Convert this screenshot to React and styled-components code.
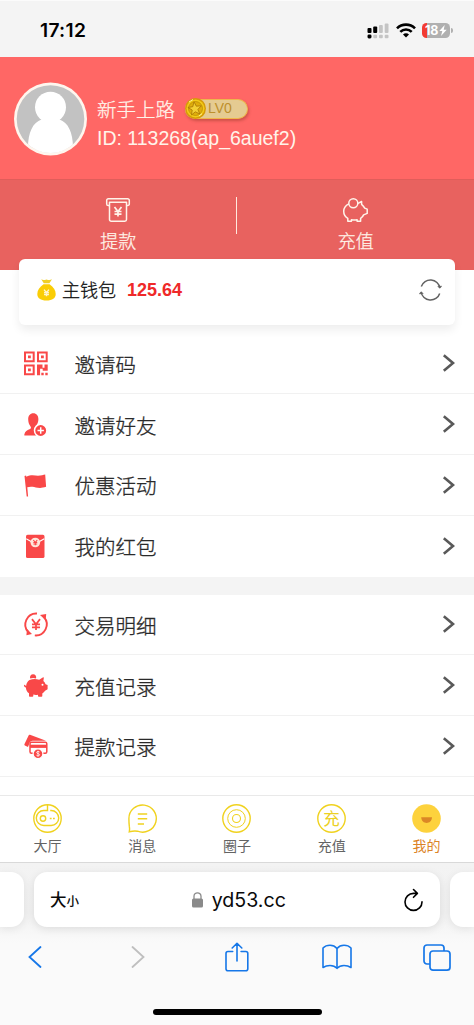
import React from 'react';
import styled, { createGlobalStyle } from "styled-components";

const GlobalStyle = createGlobalStyle`
  * { box-sizing: border-box; }
  body { margin: 0; background: #fff; }
  svg { display: block; flex: none; overflow: visible; }
`;

const Page = styled.div`
  width: 474px;
  height: 1025px;
  display: flex;
  flex-direction: column;
  overflow: hidden;
  background: #fff;
  font-family: "Liberation Sans", "Noto Sans CJK SC", sans-serif;
  font-weight: 300;
`;

const StatusBar = styled.header`
  height: 57px;
  flex: none;
  display: flex;
  align-items: center;
  justify-content: space-between;
  padding: 3px 22px 0 40px;
  background: #f4f4f4;
  border-top: 1px solid #fbfbfb;
`;

const Clock = styled.span`
  margin-top: -2px;
  font: 600 19.2px/22px Inter, sans-serif;
  letter-spacing: 0.3px;
  color: #000;
`;

const StatusIcons = styled.div`
  display: flex;
  align-items: center;
  gap: 6.5px;
`;

const Battery = styled.div`
  display: flex;
  align-items: center;
  justify-content: center;
  width: 27.5px;
  height: 15.5px;
  margin-right: 2.5px;
  border-radius: 4.5px;
  background: linear-gradient(90deg, #f23b32 0 5px, #b0b0b0 5px);
  color: #fff;
  font: 700 12.5px/15px Inter, sans-serif;
  position: relative;
  &::after {
    content: "";
    position: absolute;
    right: -3px;
    top: 5.5px;
    width: 1.5px;
    height: 4.5px;
    border-radius: 0 2px 2px 0;
    background: #b0b0b0;
  }
`;

const Profile = styled.section`
  height: 122px;
  flex: none;
  display: flex;
  align-items: center;
  gap: 10px;
  padding: 2px 14px 0;
  background: #ff6765;
  color: #fff4ea;
`;

const ProfileText = styled.div`
  display: flex;
  flex-direction: column;
  padding-top: 10px;
`;

const NameLine = styled.div`
  display: flex;
  align-items: center;
  gap: 10px;
  height: 28px;
  font-size: 19.5px;
  line-height: 28px;
  -webkit-text-stroke: 0.25px;
`;

const UserId = styled.div`
  font-size: 19.5px;
  line-height: 28px;
`;

const Level = styled.span`
  display: flex;
  align-items: center;
  width: 63px;
  height: 20px;
  margin-top: -3px;
  border: 1.5px solid #efb64c;
  border-left: 0;
  border-radius: 10px;
  background: #e5cb91;
  box-shadow: 1px 2px 3px rgba(130, 50, 30, 0.4);
  color: #bd902d;
  font-size: 14px;
  line-height: 17px;
  gap: 2px;
  -webkit-text-stroke: 0;
`;

const Actions = styled.section`
  height: 91px;
  flex: none;
  display: flex;
  align-items: flex-start;
  background: #e8625f;
  border-top: 1px solid #e05d5a;
  color: #fff4ea;
`;

const Action = styled.div`
  flex: 1;
  display: flex;
  flex-direction: column;
  align-items: center;
  gap: 7px;
  padding-top: 18px;
  font-size: 18px;
  line-height: 26px;
  -webkit-text-stroke: 0.25px;
`;

const ActionDivider = styled.div`
  width: 1px;
  height: 37px;
  margin: 17px 1px 0 -1px;
  background: #ffe9df;
`;

const Wallet = styled.section`
  height: 65.5px;
  flex: none;
  display: flex;
  align-items: flex-start;
  margin: -11px 19px 0;
  padding: 17px 13px 0 18px;
  border-radius: 6px;
  background: #fff;
  box-shadow: 0 5px 10px rgba(0, 0, 0, 0.07);
  color: #0c0c0c;
  font-size: 18px;
  line-height: 28px;
`;

const WalletIcon = styled.span`
  height: 28px;
  display: flex;
  align-items: center;
`;

const WalletName = styled.span`
  margin-left: 6px;
  padding-top: 1px;
  -webkit-text-stroke: 0.3px;
`;

const Balance = styled.span`
  margin-left: 11px;
  flex: 1;
  font-weight: 700;
  color: #ef2929;
`;

const MenuGroup = styled.nav`
  flex: none;
  padding-top: ${(p) => p.$top || 0}px;
  border-bottom: ${(p) => (p.$gap ? "18.5px solid #f4f4f4" : "0")};
`;

const MenuRow = styled.div`
  height: 60.75px;
  display: flex;
  align-items: center;
  padding: 0 19px 0 23.5px;
  border-bottom: 1px solid ${(p) => (p.$last ? "transparent" : "#f1f1f1")};
  color: #2a2a2a;
`;

const MenuLabel = styled.span`
  flex: 1;
  padding: 5px 0 0 27px;
  font-size: 20.5px;
  line-height: 30px;
  -webkit-text-stroke: 0.3px;
`;

const TabBar = styled.nav`
  height: 67px;
  flex: none;
  display: flex;
  margin-top: auto;
  border-top: 1px solid #e9e9e9;
  background: #fff;
`;

const Tab = styled.div`
  flex: 1;
  display: flex;
  flex-direction: column;
  align-items: center;
  padding-top: 8px;
  gap: 3px;
  font-size: 14px;
  font-weight: 400;
  line-height: 20px;
  color: ${(p) => (p.$active ? "#dc8427" : "#636363")};
`;

const Browser = styled.footer`
  height: 163px;
  flex: none;
  display: flex;
  flex-direction: column;
  align-items: center;
  border-top: 1px solid #d9d9d9;
  background: linear-gradient(#f3f3f3, #f1f1f1 50px, #fafafa 80px);
`;

const AddressRow = styled.div`
  width: 474px;
  display: flex;
  gap: 10px;
  padding-top: 9px;
`;

const SideTab = styled.div`
  width: 24px;
  height: 55px;
  background: #fff;
  box-shadow: 0 2px 8px rgba(0, 0, 0, 0.08);
  border-radius: ${(p) => (p.$right ? "13px 0 0 13px" : "0 13px 13px 0")};
`;

const Address = styled.div`
  flex: 1;
  height: 55px;
  display: flex;
  align-items: center;
  justify-content: space-between;
  padding: 0 17px 0 16px;
  border-radius: 13px;
  background: #fff;
  box-shadow: 0 2px 9px rgba(0, 0, 0, 0.1);
  color: #0a0a0a;
`;

const TextSize = styled.span`
  width: 24px;
  white-space: nowrap;
  font: 500 16.5px/24px "Noto Sans CJK SC", sans-serif;
  small { font-size: 12.5px; }
`;

const Url = styled.span`
  display: flex;
  align-items: center;
  gap: 8.5px;
  font: 400 19.6px/24px Inter, sans-serif;
`;

const Toolbar = styled.div`
  width: 474px;
  height: 60px;
  display: grid;
  grid-template-columns: 86px 103px 96px 103px 86px;
  align-items: center;
  justify-items: center;
  svg:first-child { margin-right: 16px; }
  svg:last-child { margin-left: 12px; }
`;

const HomeBar = styled.div`
  width: 169px;
  height: 6px;
  margin-top: 22px;
  border-radius: 3px;
  background: #000;
`;

const RED = "#f94848";
const GOLD = "#f0d21f";
const BLUE = "#1677e8";

function Yen({ x, y, s = 1, color, w = 1.5 }) {
  return (
    <g transform={`translate(${x} ${y}) scale(${s})`} fill="none" stroke={color} strokeWidth={w}>
      <path d="M-3.5-4.5 0 0l3.5-4.5M0 0v5M-3.5 0h7M-3.5 2.6h7" />
    </g>
  );
}

function Signal() {
  return (
    <svg width="22" height="16" viewBox="0 0 22 16">
      <g fill="#000">
        <rect x="0.5" y="5" width="4" height="5" rx="1" />
        <rect x="6.2" y="3.5" width="4" height="6.5" rx="1" />
        <rect x="0.5" y="11.5" width="4" height="4" rx="1.4" />
      </g>
      <g fill="#c4c4c4">
        <rect x="12" y="2" width="3.8" height="8" rx="1" />
        <rect x="17.7" y="0.5" width="3.8" height="9.5" rx="1" />
        <rect x="6.3" y="11.8" width="3.8" height="3.5" rx="1" />
        <rect x="12" y="11.8" width="3.8" height="3.5" rx="1" />
        <rect x="17.7" y="11.8" width="3.8" height="3.5" rx="1" />
      </g>
    </svg>
  );
}

function Wifi() {
  return (
    <svg width="20" height="15" viewBox="0 0 20 15">
      <g fill="none" stroke="#000" strokeWidth="2.6">
        <path d="M1 5.3a12.8 12.8 0 0 1 18 0M4.3 8.8a8.1 8.1 0 0 1 11.4 0" />
      </g>
      <path d="M7 11.4a4.2 4.2 0 0 1 6 0l-3 3.1z" />
    </svg>
  );
}

function Avatar() {
  return (
    <svg width="73" height="74" viewBox="0 0 73 74">
      <defs>
        <clipPath id="face"><circle cx="36.5" cy="37" r="34" /></clipPath>
      </defs>
      <circle cx="36.5" cy="37" r="36.5" fill="#fff6ee" />
      <circle cx="36.5" cy="37" r="33.8" fill="#c2c2c2" />
      <g fill="#fff" clipPath="url(#face)">
        <circle cx="36.5" cy="25.3" r="15.5" />
        <path d="M14 66c0-16 5-25.5 13.5-28.5q2-1 0-3h18q-2 2 0 3C54 40.5 59 50 59 66l-4 8H18z" />
      </g>
    </svg>
  );
}

function Coin() {
  return (
    <svg width="21" height="21" viewBox="0 0 21 21">
      <circle cx="10.5" cy="10.5" r="10.5" fill="#d69b08" />
      <circle cx="10.5" cy="10.5" r="9" fill="#f3cb17" />
      <circle cx="10.5" cy="10.5" r="7" fill="#dfae0b" stroke="#b98607" strokeWidth=".7" />
      <path d="m9 3.8 2.300 4.400 5-.4-3.400 3.600 1.900 4.600-4.500-2.200-3.800 3.200.7-5-4.300-2.500 4.900-.8z" fill="#f3d033" stroke="#a87305" strokeWidth=".8" />
      <path d="m4 4 4-2.500M14 18l3-2.300" stroke="#fff29a" />
    </svg>
  );
}

function WithdrawIcon() {
  return (
    <svg width="24" height="24" viewBox="0 0 24 24" fill="none" stroke="#fff4ea" strokeWidth="1.5" strokeLinejoin="round">
      <path d="M3.5 7.5H2.3A1.6 1.6 0 0 1 .7 5.9V2.3A1.6 1.6 0 0 1 2.3.7h19.400a1.600 1.600 0 0 1 1.600 1.600v3.600a1.600 1.600 0 0 1-1.600 1.600h-1.200" />
      <path d="M3.5 4.3h17v17.200a1.700 1.700 0 0 1-1.700 1.700H5.200a1.700 1.700 0 0 1-1.700-1.700z" />
      <Yen x={12} y={13.5} color="#fff4ea" w={1.7} />
    </svg>
  );
}

function PigOutline() {
  return (
    <svg width="25" height="24" viewBox="0 0 25 24" fill="none" stroke="#fff4ea" strokeWidth="1.5" strokeLinejoin="round">
      <circle cx="10.3" cy="5.2" r="4.5" />
      <path d="M5.800 5.800C2.500 7.500.7 10 .7 13.200c0 3.300 1.600 5.600 4.100 7.200v2.900h3.600v-1.600c2 .5 3.800.5 5.700 0v1.600h3.500v-2.900c1.500-.9 2.400-2 3-3.500l3.600-1.500v-4.300l-2.500-1C20.900 8.400 20 7.400 18.600 6.300V3.500l-3.100 1.700h-.7" />
    </svg>
  );
}

function MoneyBag() {
  return (
    <svg width="19" height="22" viewBox="0 0 19 22">
      <path d="M4.200.3c1.600 1 3 .9 5.300.2 2.200.7 3.800.8 5.500-.2l-2.600 4H6.800z" fill="#f0cf26" />
      <path d="M6.500 5.300h6.100C16.500 8 18.700 11.300 18.700 15c0 4.300-3.300 6.500-9.200 6.500S.3 19.300.3 15c0-3.700 2.300-7 6.200-9.700z" fill="#facd05" />
      <Yen x={9.5} y={13.8} s={0.7} color="#fff4cf" w={2} />
    </svg>
  );
}

function SyncIcon() {
  return (
    <svg width="23" height="22" viewBox="0 0 23 22" fill="none" stroke="#626262" strokeWidth="1.5">
      <path d="M2.300 7.500A9.600 9.600 0 0 1 20.900 9M20.700 14.500A9.600 9.600 0 0 1 2.100 13" />
      <path d="m18.700 7.500 2.300 1.800 1.700-2.200zM4.300 14.500 2 12.700.3 14.900z" fill="#626262" strokeWidth=".5" />
    </svg>
  );
}

function QrIcon() {
  return (
    <g>
      <g fill="none" stroke={RED} strokeWidth="2">
        <path d="M1 1h8.700v8.700H1zM14 1h8.700v8.700H14zM1 14h8.700v8.700H1z" />
      </g>
      <path d="M4 4h2.800v2.800H4zM17 4h2.800v2.800H17zM4 17h2.800v2.800H4zM13 13h5.500v3.200h2V13h3.200v6.200h-5v-2h-2.600v6.500H13zM17.300 21.300h2.400v2.400h-2.400zM21.300 21.300h2.400v2.400h-2.400z" />
    </g>
  );
}

function InviteIcon() {
  return (
    <g>
      <path d="M9.300.8c3.200 0 5.100 2.400 5.100 5.900 0 2.900-1.100 5.100-2.300 6.600-.6.900-.4 2 .7 2.500l1 .5-1.600 6.800H.9c-.7 0-.7-.6-.5-1.300.7-3 2.700-4.300 5.100-5 1.600-.5 1.900-1.800.9-3.100C5 12 4.200 9.600 4.200 6.700 4.200 3.200 6.100.8 9.300.8z" />
      <circle cx="16.7" cy="18" r="6.2" fill={RED} stroke="#fff" strokeWidth="1.5" />
      <path d="M16.700 14.800v6.400M13.500 18h6.400" stroke="#fff" strokeWidth="1.5" />
    </g>
  );
}

function FlagIcon() {
  return <path d="M.5 2.500 2.100 2l.2 1.200C7.200.8 11.200 2.200 14 2.200c3.100 0 5.500-.8 7.200-1.200l.9 12.300c-6 2.200-10.500.5-13.500 0-2-.3-3.700 0-5.300.4l.8 9.200-1.400.1z" />;
}

function RedPacket() {
  return (
    <g>
      <rect x="2" y=".3" width="18.5" height="23.3" rx="1.6" />
      <path d="m2.200 4.300 6.200 3.400M20.300 4.300l-6.200 3.400" stroke="#fff" strokeWidth="1.1" />
      <circle cx="11.3" cy="8" r="4.8" fill="#ffe7dc" />
      <Yen x={11.3} y={8} s={0.55} color={RED} w={2} />
    </g>
  );
}

function TradeIcon() {
  return (
    <g>
      <g fill="none" stroke={RED} strokeWidth="1.9">
        <path d="M13 1A11 11 0 0 0 4.300 19.500M10.800 22.900A11 11 0 0 0 20 4.700" />
      </g>
      <path d="m16 2.400 6.200-1-.6 6.300zM8 21.500l-5.600 1.300.6-6.300z" />
      <Yen x={12} y={11.8} s={1.15} color={RED} w={1.5} />
    </g>
  );
}

function PigIcon() {
  return (
    <g>
      <path d="M6.200 4.900a3.100 3.100 0 1 1 5.800 0q-2.800-.9-5.800 0z" />
      <path d="M5.500 6.500c3.300-1.400 6.500-1.400 9.700-.2l3.600-2.400c.8-.3 1.100 0 1 .7l-.4 2.900c1.100 1 1.800 2 2.200 3.200l2 .7v4.400l-2.500 1.500c-.8 1.100-1.700 2-2.800 2.700v2.400c0 .5-.3.800-.8.800h-2.700c-.6 0-.8-.3-.8-.9v-1.100c-1.700.3-3.200.2-4.700-.1v1.200c0 .6-.3.900-.8.900H5.800c-.5 0-.8-.3-.8-.8v-2.700C3 18.300 2 16.200 1.900 13.900c-1.300-.3-1.900-1.200-1.900-2.500l1-.2c.1.700.5 1.100 1.100 1.200.3-2.500 1.500-4.600 3.400-5.900z" />
      <circle cx="18.5" cy="11.2" r="1" fill="#fff" />
    </g>
  );
}

function CardsIcon() {
  return (
    <g>
      <path d="M4.600.9Q5-.1 6 .3l16 5.900H8.500q-2 0-2.800 1.800L4 12.500.9 11q-.8-.5-.5-1.300z" />
      <rect x="6" y="7.7" width="16.8" height="11" rx="1.5" fill="#fff" stroke={RED} strokeWidth="1.5" />
      <path d="M6 10.200h17v3.200H6z" />
      <circle cx="14" cy="19.2" r="4.9" stroke="#fff" strokeWidth="1.2" />
      <path d="M15.600 17.500c-.7-.8-3-.7-3 .5s3 1 3 2.300-2.400 1.300-3.200.4M14 16.300v5.800" fill="none" stroke="#fff" strokeWidth=".8" />
    </g>
  );
}

function Chevron() {
  return (
    <svg width="12" height="18" viewBox="0 0 12 18" fill="none" stroke="#595959" strokeWidth="2.6">
      <path d="m.8 1.200 9.200 7.800-9.200 7.800" />
    </svg>
  );
}

const inviteMenu = [
  { label: "邀请码", Icon: QrIcon },
  { label: "邀请好友", Icon: InviteIcon },
  { label: "优惠活动", Icon: FlagIcon },
  { label: "我的红包", Icon: RedPacket },
];

const recordMenu = [
  { label: "交易明细", Icon: TradeIcon },
  { label: "充值记录", Icon: PigIcon },
  { label: "提款记录", Icon: CardsIcon },
];

function Menu({ items, top, gap }) {
  return (
    <MenuGroup $top={top} $gap={gap}>
      {items.map(({ label, Icon }, i) => (
        <MenuRow key={label} $last={gap && i === items.length - 1}>
          <svg width="24" height="24" viewBox="0 -0.5 24 24" fill={RED}><Icon /></svg>
          <MenuLabel>{label}</MenuLabel>
          <Chevron />
        </MenuRow>
      ))}
    </MenuGroup>
  );
}

const tabs = [
  {
    label: "大厅",
    art: (
      <>
        <circle cx="14.5" cy="14.5" r="13.7" />
        <path d="M14.500 1v5.500H10.800a7.500 7.500 0 0 0 0 15h7.400a7.500 7.500 0 0 0 0-15h-1" />
        <circle cx="10" cy="14.5" r="2.7" />
        <path d="M16.800 14.500h1.800M20 14.500h1.800" strokeWidth="1.6" />
      </>
    ),
  },
  {
    label: "消息",
    art: (
      <>
        <path d="M1.300 27.700c.7-2.500.3-4 0-5.500C1 19.500.9 17 .9 14.500a13.700 13.600 0 1 1 8.600 12.700c-2.800-.5-5.200-.2-8.200.5z" />
        <path d="M9.800 10h9.400M9.800 14.700h9.400M9.800 20h6.200" strokeWidth="1.6" />
      </>
    ),
  },
  {
    label: "圈子",
    art: (
      <>
        <circle cx="14.5" cy="14.5" r="13.7" />
        <circle cx="14.5" cy="14.5" r="8.8" strokeWidth="1" />
        <circle cx="14.5" cy="14.5" r="4" strokeWidth="1.1" />
      </>
    ),
  },
  {
    label: "充值",
    art: (
      <>
        <circle cx="14.5" cy="14.5" r="13.7" />
        <text x="14.5" y="20.5" textAnchor="middle" fontSize="16.5" fill="#ecd022" stroke="none">充</text>
      </>
    ),
  },
  {
    label: "我的",
    active: true,
    art: (
      <>
        <circle cx="14.5" cy="14.5" r="14.3" fill="#fdd23d" stroke="none" />
        <path d="M9.200 13.300h10.800c-.3 7.600-10.500 7.600-10.800 0z" fill="#db8726" stroke="none" />
      </>
    ),
  },
];

function Safari() {
  return (
    <Browser>
      <AddressRow>
        <SideTab />
        <Address>
          <TextSize>大<small>小</small></TextSize>
          <Url>
            <svg width="11" height="16" viewBox="0 0 11 16">
              <rect y="6.5" width="11" height="9" rx="1.5" fill="#8a8a8a" />
              <path d="M2 7V4.300a3.500 3.500 0 0 1 7 0V7" fill="none" stroke="#8a8a8a" strokeWidth="1.3" />
            </svg>
            yd53.cc
          </Url>
          <svg width="19" height="22" viewBox="0 0 19 22" fill="none" stroke="#000" strokeWidth="1.6" strokeLinecap="round" strokeLinejoin="round">
            <path d="M13 4.400H9.500A8.500 8.500 0 1 0 18 12.900M9.500.5l3.900 3.900-3.900 3.900" />
          </svg>
        </Address>
        <SideTab $right />
      </AddressRow>
      <Toolbar>
        <svg width="14" height="22" viewBox="0 0 14 22" fill="none" stroke={BLUE} strokeWidth="1.8" strokeLinecap="round">
          <path d="M12.500 1 1.500 11l11 10" />
        </svg>
        <svg width="14" height="22" viewBox="0 0 14 22" fill="none" stroke="#bfbfbf" strokeWidth="1.8" strokeLinecap="round">
          <path d="m1.500 1 11 10-11 10" />
        </svg>
        <svg width="24" height="30" viewBox="0 0 24 30" fill="none" stroke={BLUE} strokeWidth="1.6" strokeLinecap="round" strokeLinejoin="round">
          <path d="M7.700 9.500H3a2 2 0 0 0-2 2v15.200a2 2 0 0 0 2 2h17.800a2 2 0 0 0 2-2V11.500a2 2 0 0 0-2-2h-4.700M12 19V1.300M7.200 6 12 1.300 16.800 6" />
        </svg>
        <svg width="30" height="26" viewBox="0 0 30 26" fill="none" stroke={BLUE} strokeWidth="1.6" strokeLinejoin="round">
          <path d="M15 4.500C13.300 2.500 11 1.300 8 1.300S2.500 2.500 1 4v19.500c2-1.300 4.300-2 7-2s5.300 1 7 2.800c1.700-1.800 4.300-2.800 7-2.800s5 .7 7 2V4c-1.500-1.500-4-2.700-7-2.700s-5.300 1.200-7 3.200z" />
          <path d="M15 4.500v19.800" />
        </svg>
        <svg width="28" height="27" viewBox="0 0 28 27" fill="none" stroke={BLUE} strokeWidth="1.7" strokeLinejoin="round">
          <path d="M7 20H4a3 3 0 0 1-3-3V4a3 3 0 0 1 3-3h14a3 3 0 0 1 3 3v3" />
          <rect x="7" y="7" width="20" height="19.2" rx="3" />
        </svg>
      </Toolbar>
      <HomeBar />
    </Browser>
  );
}

function App() {
  return (
    <>
      <GlobalStyle />
      <Page>
        <StatusBar>
          <Clock>17:12</Clock>
          <StatusIcons>
            <Signal />
            <Wifi />
            <Battery>
              18
              <svg width="8" height="11" viewBox="0 0 8 11" fill="#fff">
                <path d="M5.700 0 .3 6h3L2 11l5.700-6.300h-3z" />
              </svg>
            </Battery>
          </StatusIcons>
        </StatusBar>
        <Profile>
          <Avatar />
          <ProfileText>
            <NameLine>
              新手上路
              <Level><Coin />LV0</Level>
            </NameLine>
            <UserId>ID: 113268(ap_6auef2)</UserId>
          </ProfileText>
        </Profile>
        <Actions>
          <Action><WithdrawIcon />提款</Action>
          <ActionDivider />
          <Action><PigOutline />充值</Action>
        </Actions>
        <Wallet>
          <WalletIcon><MoneyBag /></WalletIcon>
          <WalletName>主钱包</WalletName>
          <Balance>125.64</Balance>
          <WalletIcon><SyncIcon /></WalletIcon>
        </Wallet>
        <Menu items={inviteMenu} top={9} gap />
        <Menu items={recordMenu} />
        <TabBar>
          {tabs.map((tab) => (
            <Tab key={tab.label} $active={tab.active}>
              <svg width="29" height="29" viewBox="0 0 29 29" fill="none" stroke={GOLD} strokeWidth="1.4">
                {tab.art}
              </svg>
              {tab.label}
            </Tab>
          ))}
        </TabBar>
        <Safari />
      </Page>
    </>
  );
}

export default App
